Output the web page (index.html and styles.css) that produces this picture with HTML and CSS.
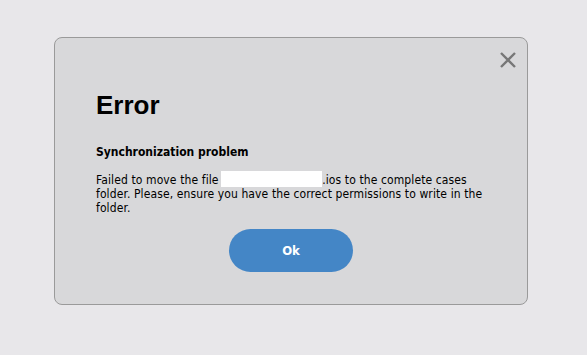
FILE: index.html
```html
<!DOCTYPE html>
<html>
<head>
<meta charset="utf-8">
<link rel="stylesheet" href="styles.css">
</head>
<body>
<div class="dialog">
  <button class="close" aria-label="Close">
    <svg width="18" height="18" viewBox="0 0 18 18"><path d="M2 2 L16 16 M16 2 L2 16" stroke="#777" stroke-width="2.4" fill="none"/></svg>
  </button>
  <h1 class="title">Error</h1>
  <h2 class="subtitle">Synchronization problem</h2>
  <p class="message">Failed to move the file <span class="redact"></span>.ios to the complete cases folder. Please, ensure you have the correct permissions to write in the folder.</p>
  <div class="actions"><button class="ok">Ok</button></div>
</div>
</body>
</html>
```
FILE: styles.css
```css
html, body { margin: 0; padding: 0; }
body {
  background: #e8e7ea;
  width: 587px;
  height: 355px;
  padding-top: 37px;
  padding-left: 54px;
  box-sizing: border-box;
}
.dialog {
  position: relative;
  width: 474px;
  height: 268px;
  box-sizing: border-box;
  background: #d8d8da;
  border: 1px solid #9a9a9a;
  border-radius: 8px;
  padding: 52px 40px 0 41px;
}
.close {
  position: absolute;
  top: 13px;
  right: 10px;
  width: 18px;
  height: 18px;
  padding: 0;
  border: 0;
  background: none;
}
.close svg { display: block; }
.title {
  margin: 0;
  font-family: "Liberation Sans", Arial, sans-serif;
  font-weight: bold;
  font-size: 26px;
  line-height: 30px;
  color: #000;
}
.subtitle {
  margin: 25px 0 0;
  font-family: "DejaVu Sans Condensed", "DejaVu Sans", Verdana, sans-serif;
  font-weight: bold;
  font-size: 12px;
  line-height: 14px;
  color: #000;
}
.message {
  margin: 12px 0 0;
  font-family: "DejaVu Sans Condensed", "DejaVu Sans", Verdana, sans-serif;
  font-size: 12px;
  line-height: 14px;
  letter-spacing: 0.11px;
  color: #000;
  width: 400px;
}
.redact {
  display: inline-block;
  width: 101px;
  height: 16px;
  margin-left: -1px;
  background: #fff;
  vertical-align: -3px;
}
.actions {
  display: flex;
  justify-content: center;
  margin-top: 14px;
  padding-right: 1px;
}
.ok {
  width: 124px;
  height: 43px;
  border: 0;
  border-radius: 22px;
  background: #4486c6;
  color: #fff;
  font-family: "DejaVu Sans Condensed", "DejaVu Sans", Verdana, sans-serif;
  font-weight: bold;
  font-size: 13px;
}
```
